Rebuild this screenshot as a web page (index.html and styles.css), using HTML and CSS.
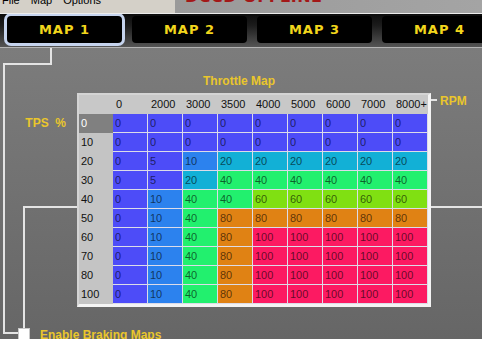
FILE: index.html
```html
<!DOCTYPE html>
<html lang="en">
<head>
    <meta charset="UTF-8">
    <title>DCCD Map Editor</title>
    <link rel="stylesheet" href="styles.css">
</head>
<body>
  <div class="topbar">
    <div class="menu">
      <span>File</span>
      <span>Map</span>
      <span>Options</span>
    </div>
    <div class="status">
      <p>DCCD OFFLINE</p>
    </div>
  </div>
  <div class="tabs">
    <div class="tab active">Map 1</div>
    <div class="tab">Map 2</div>
    <div class="tab">Map 3</div>
    <div class="tab">Map 4</div>
  </div>
  <div class="main">
    <p class="title">Throttle Map</p>
    <div class="map-row">
      <div class="tps">TPS&nbsp;&nbsp;%</div>
      <div class="map">
        <div class="hd"></div><div class="hd">0</div><div class="hd">2000</div><div class="hd">3000</div><div class="hd">3500</div><div class="hd">4000</div><div class="hd">5000</div><div class="hd">6000</div><div class="hd">7000</div><div class="hd">8000+</div>

        <div class="rh sel">0</div><div class="c v0">0</div><div class="c v0">0</div><div class="c v0">0</div><div class="c v0">0</div><div class="c v0">0</div><div class="c v0">0</div><div class="c v0">0</div><div class="c v0">0</div><div class="c v0">0</div>
        <div class="rh">10</div><div class="c v0">0</div><div class="c v0">0</div><div class="c v0">0</div><div class="c v0">0</div><div class="c v0">0</div><div class="c v0">0</div><div class="c v0">0</div><div class="c v0">0</div><div class="c v0">0</div>
        <div class="rh">20</div><div class="c v0">0</div><div class="c v0">5</div><div class="c v10">10</div><div class="c v20">20</div><div class="c v20">20</div><div class="c v20">20</div><div class="c v20">20</div><div class="c v20">20</div><div class="c v20">20</div>
        <div class="rh">30</div><div class="c v0">0</div><div class="c v0">5</div><div class="c v20">20</div><div class="c v40">40</div><div class="c v40">40</div><div class="c v40">40</div><div class="c v40">40</div><div class="c v40">40</div><div class="c v40">40</div>
        <div class="rh">40</div><div class="c v0">0</div><div class="c v10">10</div><div class="c v40">40</div><div class="c v40">40</div><div class="c v60">60</div><div class="c v60">60</div><div class="c v60">60</div><div class="c v60">60</div><div class="c v60">60</div>
        <div class="rh">50</div><div class="c v0">0</div><div class="c v10">10</div><div class="c v40">40</div><div class="c v80">80</div><div class="c v80">80</div><div class="c v80">80</div><div class="c v80">80</div><div class="c v80">80</div><div class="c v80">80</div>
        <div class="rh">60</div><div class="c v0">0</div><div class="c v10">10</div><div class="c v40">40</div><div class="c v80">80</div><div class="c v100">100</div><div class="c v100">100</div><div class="c v100">100</div><div class="c v100">100</div><div class="c v100">100</div>
        <div class="rh">70</div><div class="c v0">0</div><div class="c v10">10</div><div class="c v40">40</div><div class="c v80">80</div><div class="c v100">100</div><div class="c v100">100</div><div class="c v100">100</div><div class="c v100">100</div><div class="c v100">100</div>
        <div class="rh">80</div><div class="c v0">0</div><div class="c v10">10</div><div class="c v40">40</div><div class="c v80">80</div><div class="c v100">100</div><div class="c v100">100</div><div class="c v100">100</div><div class="c v100">100</div><div class="c v100">100</div>
        <div class="rh">100</div><div class="c v0">0</div><div class="c v10">10</div><div class="c v40">40</div><div class="c v80">80</div><div class="c v100">100</div><div class="c v100">100</div><div class="c v100">100</div><div class="c v100">100</div><div class="c v100">100</div>
      </div>
      <div class="rpm">RPM</div>
    </div>
    <div class="braking">
      <span class="check"></span>
      <span class="label">Enable Braking Maps</span>
    </div>
  </div>
  <!-- connector lines -->
  <svg class="wires" width="482" height="339" viewBox="0 0 482 339">
    <polyline points="51,48 51,64 4,64 4,333 18,333" />
    <polyline points="77,207 24,207 24,328" />
    <polyline points="431,207 482,207" />
    <polyline points="431,100 437,100" />
  </svg>
</body>
</html>
```

FILE: styles.css
```css
* {
  box-sizing: border-box;
}

body {
  margin: 0;
  width: 482px;
  height: 339px;
  overflow: hidden;
  position: relative;
  font-family: "Liberation Sans", Arial, sans-serif;
  background-color: #6c6c6c;
}

.topbar {
  height: 14px;
  display: flex;
  border-bottom: 1px solid #ececec;
  overflow: hidden;
}

.menu {
  width: 175px;
  background-color: #d4d0c8;
  display: flex;
  gap: 11px;
  padding-left: 2px;
  font-size: 11px;
  color: #000;
}

.menu span {
  margin-top: -7px;
  line-height: 14px;
}

.status {
  flex: 1;
  background: linear-gradient(to right, #9a9a9a, #a4a4a4);
}

.status p {
  margin: -11px 0 0 10px;
  font-family: "DejaVu Sans", sans-serif;
  font-weight: bold;
  font-size: 16px;
  line-height: 16px;
  letter-spacing: 0.5px;
  color: #a31818;
}

.tabs {
  height: 34px;
  display: flex;
  gap: 10px;
  padding: 2px 0 0 7px;
  background: linear-gradient(to bottom, #0c0c0c 0%, #1c1c1c 35%, #555 100%);
  border-bottom: 1px solid #b4b4b4;
  overflow: hidden;
}

.tab {
  flex: none;
  width: 115px;
  height: 27px;
  border-radius: 4px;
  background-color: #000;
  color: #f2d61c;
  font-family: "DejaVu Sans", sans-serif;
  font-weight: bold;
  font-size: 13px;
  letter-spacing: 1px;
  text-transform: uppercase;
  display: flex;
  align-items: center;
  justify-content: center;
}

.tab.active {
  box-shadow: 0 0 0 3px #c6d4ee;
}

.main {
  height: 291px;
  padding-top: 26px;
  background: linear-gradient(to bottom, #7c7c7c, #666);
}

.title {
  margin: 0 0 5px 203px;
  font-size: 12px;
  line-height: 14px;
  font-weight: bold;
  color: #eac62c;
}

.map-row {
  display: flex;
}

.tps {
  width: 77px;
  padding: 23px 11px 0 0;
  text-align: right;
  font-size: 12px;
  line-height: 14px;
  font-weight: bold;
  color: #eac62c;
}

.rpm {
  padding: 1px 0 0 9px;
  font-size: 12px;
  line-height: 14px;
  font-weight: bold;
  color: #eac62c;
}

.map {
  display: grid;
  grid-template-columns: 34px repeat(9, 35px);
  grid-auto-rows: 19px;
  border-top: 2px solid #d4d4d4;
  border-left: 2px solid #d4d4d4;
  border-right: 3px solid #f4f4f4;
  border-bottom: 3px solid #f4f4f4;
  font-size: 11px;
  line-height: 18px;
}

.hd {
  background-color: #c8c8c8;
  color: #111;
  padding-left: 3px;
}

.rh {
  background-color: #c4c4c4;
  color: #111;
  padding-left: 2px;
}

.rh.sel {
  background-color: #808080;
  color: #fff;
}

.c {
  padding-left: 2px;
  border-right: 1px solid #dcdce8;
  border-bottom: 1px solid #dcdce8;
  color: rgba(0, 0, 0, 0.62);
}

.v0 { background-color: #4d4cf8; }
.v10 { background-color: #2c82ee; }
.v20 { background-color: #12b0d6; }
.v40 { background-color: #22f06e; }
.v60 { background-color: #80e012; }
.v80 { background-color: #e08214; }
.v100 { background-color: #fc1a62; }

.braking {
  display: flex;
  align-items: flex-start;
  gap: 10px;
  margin: 21px 0 0 18px;
}

.check {
  width: 12px;
  height: 12px;
  background-color: #fff;
  border: 1px solid #c8c8c8;
}

.label {
  font-size: 12px;
  line-height: 14px;
  font-weight: bold;
  color: #eac62c;
}

.wires {
  position: absolute;
  top: 0;
  left: 0;
  pointer-events: none;
}

.wires polyline {
  fill: none;
  stroke: #e4e4e4;
  stroke-width: 2;
}
```
